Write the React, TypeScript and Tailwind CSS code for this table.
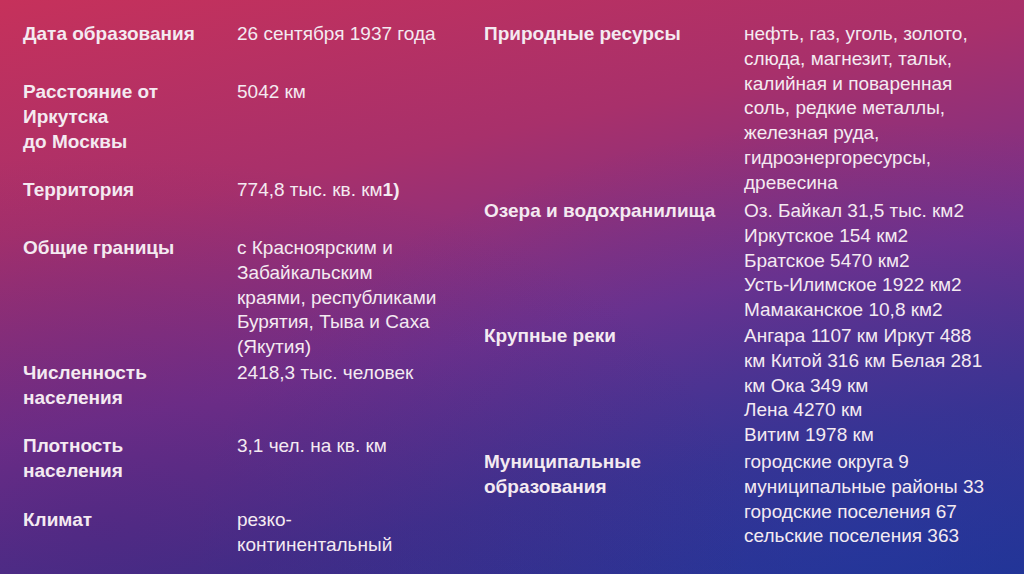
const left = [
  { h: "h-[58px]", label: ["Дата образования"], value: ["26 сентября 1937 года"] },
  { h: "h-[98px]", label: ["Расстояние от", "Иркутска", "до Москвы"], value: ["5042 км"] },
  { h: "h-[58px]", label: ["Территория"], value: ["774,8 тыс. кв. км"], bold: "1)" },
  {
    h: "h-[125px]",
    label: ["Общие границы"],
    value: ["с Красноярским и", "Забайкальским", "краями, республиками", "Бурятия, Тыва и Саха", "(Якутия)"],
  },
  { h: "h-[73px]", label: ["Численность", "населения"], value: ["2418,3 тыс. человек"] },
  { h: "h-[74px]", label: ["Плотность", "населения"], value: ["3,1 чел. на кв. км"] },
  { h: "h-[60px]", label: ["Климат"], value: ["резко-", "континентальный"] },
];

const right = [
  {
    h: "h-[177px]",
    label: ["Природные ресурсы"],
    value: [
      "нефть, газ, уголь, золото,",
      "слюда, магнезит, тальк,",
      "калийная и поваренная",
      "соль, редкие металлы,",
      "железная руда,",
      "гидроэнергоресурсы,",
      "древесина",
    ],
  },
  {
    h: "h-[125px]",
    label: ["Озера и водохранилища"],
    value: ["Оз. Байкал 31,5 тыс. км2", "Иркутское 154 км2", "Братское 5470 км2", "Усть-Илимское 1922 км2", "Мамаканское 10,8 км2"],
  },
  {
    h: "h-[126px]",
    label: ["Крупные реки"],
    value: ["Ангара 1107 км Иркут 488", "км Китой 316 км Белая 281", "км Ока 349 км", "Лена 4270 км", "Витим 1978 км"],
  },
  {
    h: "h-[110px]",
    label: ["Муниципальные", "образования"],
    value: ["городские округа 9", "муниципальные районы 33", "городские поселения 67", "сельские поселения 363"],
  },
];

type Row = { h: string; label: string[]; value: string[]; bold?: string };

function Lines({ lines, tail }: { lines: string[]; tail?: string }) {
  return (
    <>
      {lines.map((l, i) => (
        <div key={i} className="whitespace-nowrap">
          {l}
          {tail && i === lines.length - 1 ? <span className="font-bold">{tail}</span> : null}
        </div>
      ))}
    </>
  );
}

function Table({ rows, cols }: { rows: Row[]; cols: string }) {
  return (
    <div className="flex flex-col">
      {rows.map((r, i) => (
        <div key={i} className={`grid ${cols} ${r.h}`}>
          <div className="font-bold">
            <Lines lines={r.label} />
          </div>
          <div>
            <Lines lines={r.value} tail={r.bold} />
          </div>
        </div>
      ))}
    </div>
  );
}

export default function App() {
  return (
    <div className="relative w-[1024px] h-[574px] overflow-hidden bg-[linear-gradient(168deg,#c6315b_0%,#a8306b_30%,#76308a_56%,#43308a_78%,#24318e_100%)] font-['Liberation_Sans',Arial,sans-serif] text-[19px] leading-[24.8px] text-[#f4eaf1]">
      <div className="absolute inset-0 bg-[radial-gradient(ellipse_at_85%_95%,rgba(30,60,170,0.45),transparent_55%)]" />
      <div className="absolute inset-0 bg-[radial-gradient(ellipse_at_10%_92%,rgba(70,30,120,0.35),transparent_50%)]" />
      <div className="relative flex pt-[22px] pl-[23px]">
        <div className="w-[461px]">
          <Table rows={left} cols="grid-cols-[214px_1fr]" />
        </div>
        <div className="flex-1">
          <Table rows={right} cols="grid-cols-[260px_1fr]" />
        </div>
      </div>
    </div>
  );
}
